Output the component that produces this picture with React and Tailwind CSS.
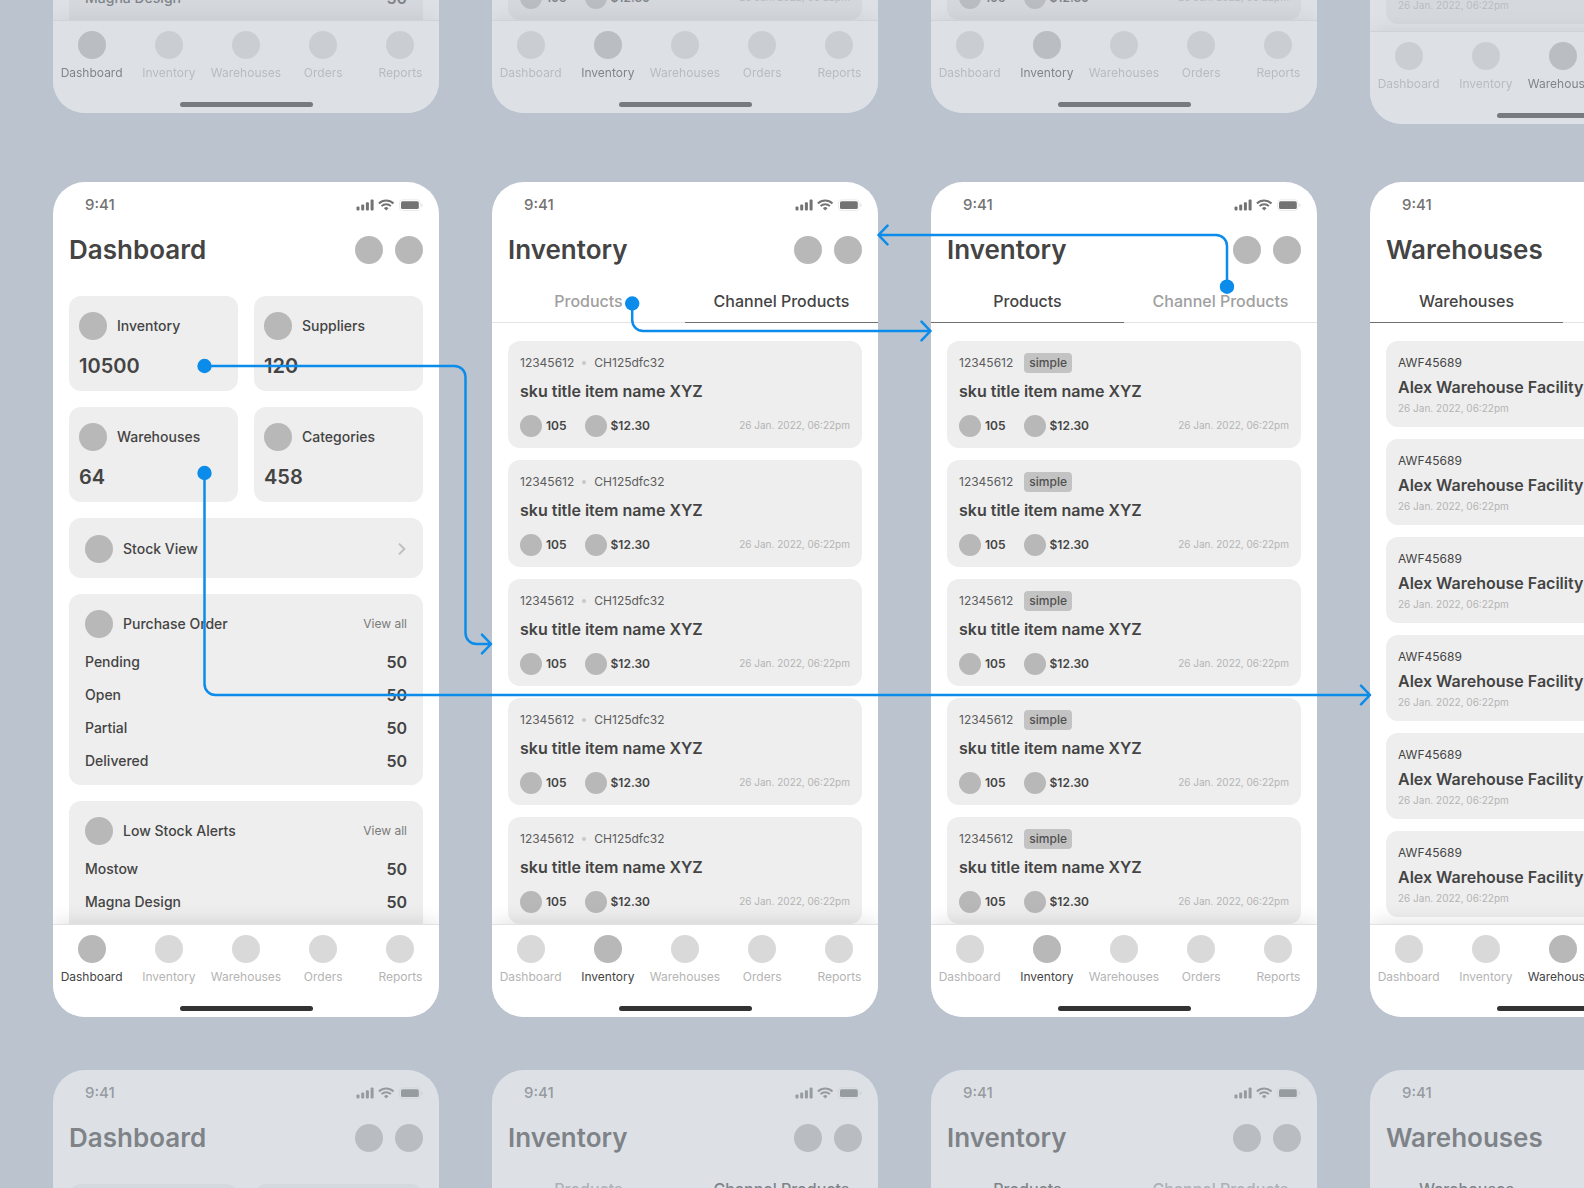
import { clsx } from 'clsx'

const NAV_ITEMS = ['Dashboard', 'Inventory', 'Warehouses', 'Orders', 'Reports']

const STATS = [
  { label: 'Inventory', value: '10500' },
  { label: 'Suppliers', value: '120' },
  { label: 'Warehouses', value: '64' },
  { label: 'Categories', value: '458' },
]

const PURCHASE_ORDERS = [
  { label: 'Pending', value: 50 },
  { label: 'Open', value: 50 },
  { label: 'Partial', value: 50 },
  { label: 'Delivered', value: 50 },
]

const LOW_STOCK = [
  { label: 'Mostow', value: 50 },
  { label: 'Magna Design', value: 50 },
]

const PRODUCT_ROWS = [1, 2, 3, 4, 5]
const WAREHOUSE_ROWS = [1, 2, 3, 4, 5, 6]

function Dot({ className }) {
  return <span className={clsx('block shrink-0 rounded-full bg-[#b8b8b8]', className || 'size-7')} />
}

function StatusBar() {
  return (
    <div className="flex h-11 items-center justify-between pt-px pr-4 pl-8 text-[#737373]">
      <span className="text-[15px] leading-5 font-medium">9:41</span>
      <svg width="67" height="12" viewBox="0 0 67 12" fill="currentColor" aria-hidden="true">
        {/* signal */}
        <rect x="0.5" y="7.5" width="3" height="4" rx="1" />
        <rect x="5.2" y="5.5" width="3" height="6" rx="1" />
        <rect x="9.9" y="3.2" width="3" height="8.3" rx="1" />
        <rect x="14.6" y="0.6" width="3" height="10.9" rx="1" />
        {/* wifi */}
        <g fill="none" stroke="currentColor" strokeWidth="2">
          <path d="M22.9 4.4a10.6 10.6 0 0 1 14.600 0" />
          <path d="M25.500 7.100a6.800 6.800 0 0 1 9.400 0" />
        </g>
        <path d="M30.200 11.500l-2.300-2.300a3.300 3.300 0 0 1 4.600 0z" />
        {/* battery */}
        <rect x="43.500" y="0.800" width="20.600" height="10.700" rx="3" fill="none" stroke="#ebebeb" />
        <rect x="45" y="2.300" width="17.800" height="7.700" rx="1.600" />
        <path d="M65.300 4.400v3.600c.8-.3 1.300-1 1.300-1.800s-.5-1.500-1.300-1.800z" fill="#dcdcdc" />
      </svg>
    </div>
  )
}

function Header({ title }) {
  return (
    <div className="flex items-center justify-between px-4 pt-[10px]">
      <h2 className="text-[26px] leading-7 font-semibold">{title}</h2>
      <div className="flex gap-3">
        <button type="button" aria-label="Search"><Dot /></button>
        <button type="button" aria-label="Notifications"><Dot /></button>
      </div>
    </div>
  )
}

function Tabs({ tabs, active }) {
  return (
    <div className="mt-4 mb-[18px] flex h-[43px] border-b border-[#e4e4e4]" role="tablist">
      {tabs.map(tab => (
        <button
          key={tab}
          type="button"
          role="tab"
          aria-selected={tab === active}
          className={clsx(
            '-mb-px flex-1 border-b pb-px text-base font-medium',
            tab === active ? 'border-[#707070]' : 'border-transparent text-[#a0a0a0]'
          )}
        >
          {tab}
        </button>
      ))}
    </div>
  )
}

function BottomNav({ active }) {
  return (
    <nav className="relative h-[93px] shrink-0 border-t border-[#e2e2e2] bg-white pt-[10px] shadow-[0_0_20px_rgba(0,0,0,0.14)]">
      <div className="grid grid-cols-5">
        {NAV_ITEMS.map(item => (
          <button key={item} type="button" className="flex flex-col items-center">
            <span className={clsx('size-7 rounded-full', item === active ? 'bg-[#b8b8b8]' : 'bg-[#d9d9d9]')} />
            <span className={clsx('mt-[6px] text-xs leading-4', item === active ? 'text-[#444444]' : 'text-[#b4b4b4]')}>
              {item}
            </span>
          </button>
        ))}
      </div>
      <div className="mx-auto mt-[21px] h-[5px] w-[133px] rounded-full bg-[#333333]" />
    </nav>
  )
}

function SummaryCard({ title, items }) {
  return (
    <section className="rounded-xl bg-[#eeeeee] px-4 pt-4 pb-2">
      <div className="mb-[7px] flex items-center">
        <Dot />
        <h3 className="ml-[10px] flex-1 text-sm font-medium">{title}</h3>
        <a href="#all" className="text-xs text-[#7a7a7a]">View all</a>
      </div>
      {items.map(item => (
        <div key={item.label} className="flex h-[33px] items-center justify-between">
          <span className="text-sm font-medium">{item.label}</span>
          <span className="text-base font-semibold">{item.value}</span>
        </div>
      ))}
    </section>
  )
}

function DashboardBody() {
  return (
    <div className="flex flex-col gap-4 px-4 pt-8">
      <div className="grid grid-cols-2 gap-4">
        {STATS.map(stat => (
          <div key={stat.label} className="rounded-xl bg-[#eeeeee] px-[10px] pt-4 pb-[11px]">
            <div className="mb-3 flex items-center gap-[10px]">
              <Dot />
              <span className="text-sm font-medium">{stat.label}</span>
            </div>
            <p className="text-xl leading-7 font-semibold">{stat.value}</p>
          </div>
        ))}
      </div>
      <button type="button" className="flex h-[60px] items-center rounded-xl bg-[#eeeeee] px-4 pt-[2px] text-left">
        <Dot />
        <span className="ml-[10px] flex-1 text-sm font-medium">Stock View</span>
        <svg width="11" height="14" viewBox="0 0 11 14" fill="none" stroke="#bdbdbd" strokeWidth="1.9" aria-hidden="true">
          <path d="M3 1.600L8.400 7L3 12.400" />
        </svg>
      </button>
      <SummaryCard title="Purchase Order" items={PURCHASE_ORDERS} />
      <SummaryCard title="Low Stock Alerts" items={[...LOW_STOCK, { label: 'Ridgeline', value: 50 }]} />
    </div>
  )
}

function ProductCard({ channel }) {
  return (
    <article className="rounded-xl bg-[#eeeeee] px-3 pt-3 pb-[11px]">
      <div className="flex h-5 items-center text-xs text-[#5c5c5c]">
        <span>12345612</span>
        {channel ? (
          <>
            <span className="mx-2 size-1 rounded-full bg-[#c8c8c8]" />
            <span>CH125dfc32</span>
          </>
        ) : (
          <span className="ml-[11px] rounded-[4px] bg-[#c3c3c3] px-[5px] leading-5 font-medium text-[#505050]">simple</span>
        )}
      </div>
      <h3 className="mt-[6px] text-base leading-6 font-semibold">sku title item name XYZ</h3>
      <div className="mt-3 flex items-center text-xs font-semibold">
        <Dot className="size-[22px]" />
        <span className="ml-1">105</span>
        <Dot className="ml-[18px] size-[22px]" />
        <span className="ml-1">$12.30</span>
        <time className="ml-auto text-[10px] font-normal text-[#b4b4b4]">26 Jan. 2022, 06:22pm</time>
      </div>
    </article>
  )
}

function WarehouseCard() {
  return (
    <article className="rounded-xl bg-[#eeeeee] px-3 py-3">
      <p className="text-xs leading-5">AWF45689</p>
      <h3 className="mt-[2px] text-base leading-6 font-semibold">Alex Warehouse Facility</h3>
      <time className="mt-[2px] block text-[10px] leading-[14px] text-[#b4b4b4]">26 Jan. 2022, 06:22pm</time>
    </article>
  )
}

function ScreenBody({ screen }) {
  if (screen === 'dashboard') return <DashboardBody />

  if (screen === 'warehouses') {
    return (
      <>
        <Tabs tabs={['Warehouses', 'Facilities']} active="Warehouses" />
        <div className="flex flex-col gap-3 px-4">
          {WAREHOUSE_ROWS.map(row => <WarehouseCard key={row} />)}
        </div>
      </>
    )
  }

  const channel = screen === 'channel'
  return (
    <>
      <Tabs tabs={['Products', 'Channel Products']} active={channel ? 'Channel Products' : 'Products'} />
      <div className="flex flex-col gap-3 px-4">
        {PRODUCT_ROWS.map(row => <ProductCard key={row} channel={channel} />)}
      </div>
    </>
  )
}

function Phone({ title, screen, faded }) {
  return (
    <div className={clsx('flex h-[835px] shrink-0 flex-col overflow-hidden rounded-[32px] bg-white', faded && 'opacity-50')}>
      <div className="min-h-0 flex-1 overflow-hidden">
        <StatusBar />
        <Header title={title} />
        <ScreenBody screen={screen} />
      </div>
      <BottomNav active={title} />
    </div>
  )
}

const COLUMNS = [
  { title: 'Dashboard', screen: 'dashboard' },
  { title: 'Inventory', screen: 'channel' },
  { title: 'Inventory', screen: 'products' },
  { title: 'Warehouses', screen: 'warehouses', low: true },
]

// Flow arrows between the screens
function Connectors() {
  return (
    <svg
      className="pointer-events-none absolute top-0 left-0"
      width="1584"
      height="1188"
      viewBox="0 0 1584 1188"
      fill="none"
      stroke="#0b8ceb"
      strokeWidth="2.5"
      strokeLinecap="round"
      strokeLinejoin="round"
      aria-hidden="true"
    >
      <path d="M204.5 366H454.5a11 11 0 0 1 11 11V633a11 11 0 0 0 11 11H491M482 634.7L491 644L482 653.3" />
      <path d="M204.5 473V684a11 11 0 0 0 11 11H1370M1361 685.7L1370 695L1361 704.3" />
      <path d="M632.2 303.5V320a11 11 0 0 0 11 11H930.5M921.5 321.7L930.5 331L921.5 340.3" />
      <path d="M1227 286.5V246a11 11 0 0 0 -11 -11H878.5M887.5 225.7L878.5 235L887.5 244.3" />
      <g fill="#0b8ceb" stroke="none">
        <circle cx="204.5" cy="366" r="7.2" />
        <circle cx="204.5" cy="473" r="7.2" />
        <circle cx="632.2" cy="303.5" r="7.2" />
        <circle cx="1227" cy="286.7" r="7.2" />
      </g>
    </svg>
  )
}

export default function App() {
  return (
    <main className="relative h-screen overflow-hidden bg-[#bbc4ce] font-['Inter',sans-serif] text-[#444444]">
      <div className="flex gap-[53px] pl-[53px]">
        {COLUMNS.map(({ title, screen, low }) => (
          <div key={screen} className="flex w-[386px] shrink-0 flex-col">
            <div className={clsx('flex h-[182px] flex-col justify-end', low ? 'pb-[58px]' : 'pb-[69px]')}>
              <Phone title={title} screen={screen} faded />
            </div>
            <div className="flex flex-col gap-[53px]">
              <Phone title={title} screen={screen} />
              <Phone title={title} screen={screen} faded />
            </div>
          </div>
        ))}
      </div>
      <Connectors />
    </main>
  )
}
